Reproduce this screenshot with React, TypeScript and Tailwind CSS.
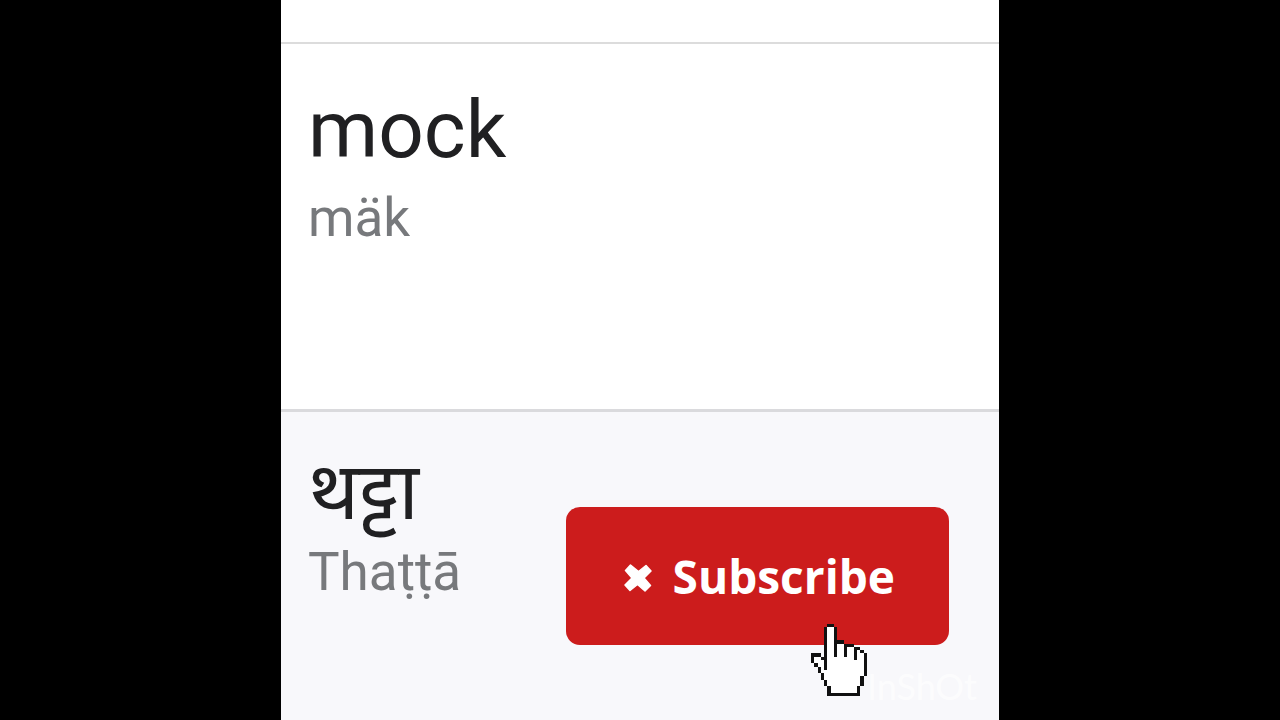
const handRows = [
    "     XX          ",
    "    X..X         ",
    "    X..X         ",
    "    X..X         ",
    "    X..X         ",
    "    X..XXX       ",
    "    X..X..XXX    ",
    "    X..X..X..XX  ",
    "    X..X..X..X.X ",
    "XXX X..X..X..X..X",
    "X..XX........X..X",
    "X...X...........X",
    " X..X...........X",
    "  X.X...........X",
    "  X.............X",
    "   X............X",
    "   X...........X ",
    "    X..........X ",
    "    X..........X ",
    "     X........X  ",
    "     X........X  ",
    "     XXXXXXXXXX  ",
];

const words = [
    { id: "en", lang: "en", word: "mock", sound: "mäk" },
    { id: "hi", lang: "hi", word: "थट्टा", sound: "Thaṭṭā" },
];

function HandCursor({ className }: { className?: string }) {
    return (
        <svg viewBox="0 0 17 22" preserveAspectRatio="none" className={className} aria-hidden="true">
            {handRows.map((row, y) =>
                row.split("").map((cell, x) =>
                    cell === " " ? null : (
                        <rect
                            key={`${x}-${y}`}
                            x={x}
                            y={y}
                            width="1"
                            height="1"
                            shapeRendering="crispEdges"
                            fill={cell === "X" ? "#111" : "#fff"}
                        />
                    )
                )
            )}
        </svg>
    );
}

function CrossIcon() {
    return (
        <svg viewBox="0 0 28 28" className="mt-1 size-7" aria-hidden="true">
            <path
                d="M6.5 1 L14.5 7.5 L22 1.5 L27 7 L20 14 L26.5 21.5 L21 27 L13.5 20.5 L6 26.5 L1 21 L8 14 L1.5 6.5 Z"
                fill="#fff"
                stroke="#fff"
                strokeWidth="1.5"
                strokeLinejoin="round"
            />
        </svg>
    );
}

function Word({ lang, word, sound, spaced }: { lang: string; word: string; sound: string; spaced?: boolean }) {
    return (
        <div>
            <h2 lang={lang} className="text-[80px] leading-[96px] text-[#202022]">
                {word}
            </h2>
            <p className={`text-[53px] leading-[64px] text-[#77797c] ${spaced ? "mt-2" : ""}`}>{sound}</p>
        </div>
    );
}

export default function App() {
    const [source, target] = words;

    return (
        <div className="flex min-h-screen justify-center bg-black">
            <main className="flex w-full max-w-[718px] flex-col bg-white font-['Roboto','Noto_Sans',sans-serif]">
                <div className="h-11 border-b-2 border-[#dcdcdc]"></div>

                {/* source word */}
                <section className="border-b-[3px] border-[#dadadd] px-[27px] pt-[38px] pb-[159px]">
                    <Word lang={source.lang} word={source.word} sound={source.sound} spaced />
                </section>

                {/* translation */}
                <section className="relative flex flex-1 items-start justify-between bg-[#f8f8fb] pr-[50px] pl-[27px] pt-8">
                    <Word lang={target.lang} word={target.word} sound={target.sound} />

                    <div className="relative mt-[63px]">
                        <button
                            type="button"
                            className="flex h-[138px] items-center gap-[21px] rounded-[14px] bg-[#cc1c1c] pr-[54px] pl-[58px] font-['Open_Sans',sans-serif] text-[46px] font-bold text-white"
                        >
                            <CrossIcon />
                            Subscribe
                        </button>
                        <HandCursor className="absolute right-[82px] -bottom-[51px] z-10 h-[72px] w-14" />
                    </div>

                    <span className="absolute right-[22px] bottom-4 font-['Lato',sans-serif] text-[36px] leading-9 text-white/70">
                        InShOt
                    </span>
                </section>
            </main>
        </div>
    );
}
